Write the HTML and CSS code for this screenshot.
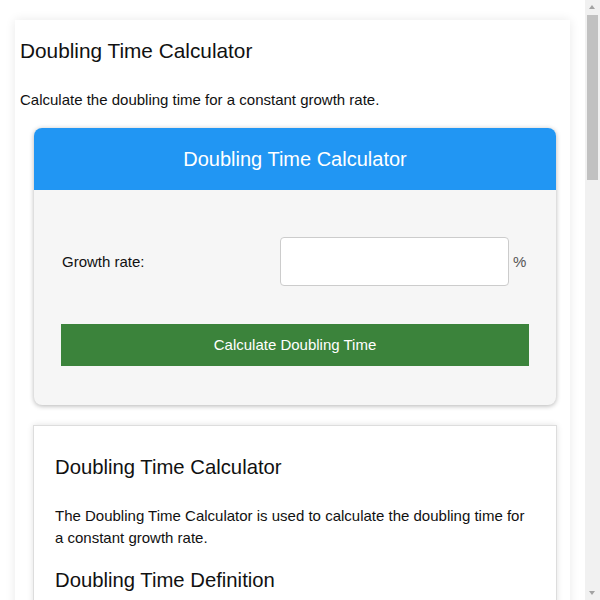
FILE: index.html
```html
<!DOCTYPE html>
<html lang="en">
<head>
<meta charset="utf-8">
<title>Doubling Time Calculator</title>
<link rel="stylesheet" href="styles.css">
</head>
<body>
<main class="page">
  <h1 class="page-title">Doubling Time Calculator</h1>
  <p class="intro">Calculate the doubling time for a constant growth rate.</p>

  <section class="calc">
    <header class="calc-head">Doubling Time Calculator</header>
    <div class="calc-body">
      <div class="row">
        <label class="row-label" for="rate">Growth rate:</label>
        <input class="row-input" id="rate" type="text">
        <span class="row-unit">%</span>
      </div>
      <button class="calc-btn" type="button">Calculate Doubling Time</button>
    </div>
  </section>

  <article class="info">
    <h2 class="info-title">Doubling Time Calculator</h2>
    <p class="info-text">The Doubling Time Calculator is used to calculate the doubling time for a constant growth rate.</p>
    <h2 class="info-title second">Doubling Time Definition</h2>
    <p class="info-text">Doubling time is the amount of time it takes for a given quantity to double in size or value at a constant growth rate. When the relative growth rate is constant, the quantity undergoes exponential growth and has a constant doubling time or period.</p>
    <p class="info-text">Doubling time is a useful measure in many areas such as population growth, inflation, resource extraction, consumption of goods, compound interest, the volume of malignant tumours, and many other things that tend to grow over time.</p>
    <h2 class="info-title second">Doubling Time Formula</h2>
    <p class="info-text">The doubling time can be calculated with the following formula:</p>
    <p class="info-text formula">T<sub>d</sub> = log(2) / log(1 + r / 100)</p>
    <p class="info-text">where T<sub>d</sub> is the doubling time and r is the growth rate given as a percentage per period.</p>
    <h2 class="info-title second">Rule of 70</h2>
    <p class="info-text">A quick approximation of the doubling time is given by the rule of 70: divide 70 by the percentage growth rate. For example, a growth rate of 7% per year means that the quantity will double in about 10 years.</p>
    <p class="info-text">Similar rules are the rule of 69.3 and the rule of 72, which are used for continuous compounding and for annual compounding with typical interest rates respectively.</p>
    <h2 class="info-title second">Example</h2>
    <p class="info-text">If a population grows at a constant rate of 3% per year, the doubling time is log(2) / log(1.03), which is approximately 23.45 years.</p>
    <p class="info-text">If an investment earns 5% interest per year, compounded annually, the money will double in approximately 14.21 years.</p>
    <h2 class="info-title second">Halving Time</h2>
    <p class="info-text">When the growth rate is negative, the quantity decreases over time. In that case the equivalent measure is called the halving time, which is the time needed for the quantity to decrease to half of its value.</p>
    <p class="info-text">Half-life is commonly used for radioactive decay, drug elimination from the body and depreciation of assets.</p>
  </article>
</main>

<div class="scrollbar" aria-hidden="true">
  <span class="sb-arrow sb-up"></span>
  <span class="sb-thumb"></span>
  <span class="sb-arrow sb-down"></span>
</div>
</body>
</html>
```

FILE: styles.css
```css
html, body {
  margin: 0;
  padding: 0;
  background: #ffffff;
}

body {
  font-family: "Liberation Sans", Arial, sans-serif;
  color: #111111;
  padding: 20px 30px 40px 15px;
}

*, *::before, *::after {
  box-sizing: border-box;
}

.page {
  background: #ffffff;
  box-shadow: 0 0 10px rgba(0, 0, 0, 0.09);
  padding: 19px 5px 30px;
}

.page-title {
  font-size: 20.8px;
  font-weight: normal;
  line-height: 24px;
  margin: 0 0 28px;
}

.intro {
  font-size: 15px;
  line-height: 18px;
  margin: 0 0 19px;
}

.calc {
  width: 522px;
  margin-left: 14px;
  border-radius: 8px;
  overflow: hidden;
  background: #f6f6f6;
  box-shadow: 0 1px 5px rgba(0, 0, 0, 0.3);
}

.calc-head {
  background: #2196f3;
  color: #ffffff;
  font-size: 20px;
  line-height: 62px;
  height: 62px;
  text-align: center;
}

.calc-body {
  padding: 47px 27px 39px;
}

.row {
  display: flex;
  align-items: center;
}

.row-label {
  width: 219px;
  padding-left: 1px;
  font-size: 15px;
  color: #111111;
}

.row-input {
  width: 229px;
  height: 49px;
  border: 1px solid #cccccc;
  border-radius: 4px;
  background: #ffffff;
  margin: 0;
  padding: 0 8px;
  font-size: 15px;
}

.row-unit {
  margin-left: 4px;
  font-size: 15px;
  color: #555555;
}

.calc-btn {
  display: block;
  width: 100%;
  height: 42px;
  margin-top: 38px;
  border: none;
  background: #3b833b;
  color: #ffffff;
  font-family: "Liberation Sans", Arial, sans-serif;
  font-size: 15px;
  line-height: 40px;
  padding: 0;
}

.info {
  width: 524px;
  margin: 20px 0 0 13px;
  border: 1px solid #dddddd;
  box-shadow: 0 0 6px rgba(0, 0, 0, 0.12);
  background: #ffffff;
  padding: 29px 21px 20px;
}

.info-title {
  font-size: 20.3px;
  font-weight: normal;
  line-height: 24px;
  margin: 0 0 26px;
}

.info-title.second {
  margin-top: 19px;
  margin-bottom: 16px;
}

.info-text {
  font-size: 15px;
  line-height: 22px;
  margin: 0 0 12px;
}

.formula {
  font-family: "Liberation Serif", serif;
  font-size: 17px;
  text-align: center;
}

/* replica of the browser's classic scrollbar, drawn over the right edge */
.scrollbar {
  position: fixed;
  top: 0;
  right: 0;
  width: 15px;
  height: 100vh;
  background: #f1f1f1;
}

.sb-thumb {
  position: absolute;
  left: 2px;
  right: 2px;
  top: 15px;
  height: 165px;
  background: #c1c1c1;
}

.sb-arrow {
  position: absolute;
  left: 4px;
  width: 0;
  height: 0;
  border-left: 3.5px solid transparent;
  border-right: 3.5px solid transparent;
}

.sb-up {
  top: 5px;
  border-bottom: 4px solid #a3a3a3;
}

.sb-down {
  bottom: 5px;
  border-top: 4px solid #a3a3a3;
}
```
